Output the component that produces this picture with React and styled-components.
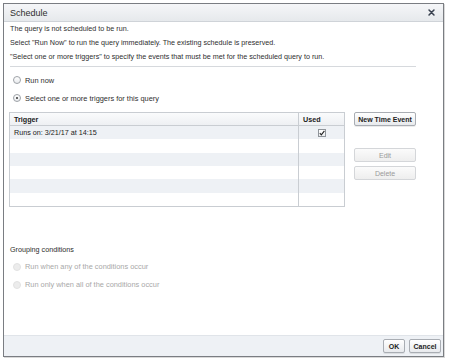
import React from "react";
import styled, { createGlobalStyle } from "styled-components";

const Global = createGlobalStyle`
  html, body { margin: 0; padding: 0; background: #ffffff; }
  body { font-family: "Liberation Sans", Arial, sans-serif; color: #333; }
  * { box-sizing: border-box; }
`;

const Page = styled.div`
  padding: 3px 0 0 3px;
  width: 474px;
  height: 362px;
`;

const Dialog = styled.div`
  width: 441px;
  height: 354px;
  border: 1px solid #7a7d82;
  display: flex;
  flex-direction: column;
  background: #fff;
  box-shadow: 1px 1px 0 rgba(0,0,0,0.15);
`;

const TitleBar = styled.div`
  height: 18px;
  flex: none;
  display: flex;
  align-items: center;
  justify-content: space-between;
  padding: 0 8px 0 6px;
  background: linear-gradient(#f5f6f8, #e6e9ec);
  border-bottom: 1px solid #cfd3d8;
  font-size: 9px;
  color: #2e2e2e;
`;

const Close = styled.svg`
  width: 7px;
  height: 7px;
`;

const Body = styled.div`
  flex: 1;
  display: flex;
  flex-direction: column;
  padding: 0 0 0 5px;
`;

const Line = styled.div`
  height: 14px;
  line-height: 14px;
  font-size: 7.2px;
  padding-left: 1px;
  color: #2e2e2e;
  white-space: nowrap;
`;

const Separator = styled.div`
  height: 1px;
  width: 406px;
  margin: 2px 0 4px 1px;
  background: #d6d9dd;
`;

const RadioRow = styled.div`
  height: 18px;
  display: flex;
  align-items: center;
  gap: 4px;
  padding-left: 4px;
  font-size: 7.4px;
  color: ${(p) => (p.$disabled ? "#a8a8a8" : "#2e2e2e")};
`;

const Radio = styled.span`
  width: 8px;
  height: 8px;
  border-radius: 50%;
  flex: none;
  display: flex;
  align-items: center;
  justify-content: center;
  border: 1px solid ${(p) => (p.$disabled ? "#e2e2e2" : "#9ea2a7")};
  background: ${(p) =>
    p.$disabled ? "#ececec" : "linear-gradient(#ffffff, #e9ebee)"};
  &::after {
    content: "";
    width: 2px;
    height: 2px;
    border-radius: 50%;
    background: #333;
    display: ${(p) => (p.$checked ? "block" : "none")};
  }
`;

const TableArea = styled.div`
  display: flex;
  align-items: flex-start;
  gap: 9px;
  margin-top: 5px;
`;

const Table = styled.div`
  width: 336px;
  border: 1px solid #c9cdd2;
  display: flex;
  flex-direction: column;
`;

const Row = styled.div`
  display: grid;
  grid-template-columns: 288px 1fr;
  height: ${(p) => (p.$head ? "13px" : "13.33px")};
  background: ${(p) =>
    p.$head ? "linear-gradient(#fafbfc, #eef0f3)" : p.$alt ? "#eef1f5" : "#fff"};
  border-bottom: ${(p) => (p.$head ? "1px solid #c9cdd2" : "none")};
  font-size: 7.2px;
  font-weight: ${(p) => (p.$head ? "bold" : "normal")};
  color: #222;
`;

const Cell = styled.div`
  display: flex;
  align-items: center;
  justify-content: ${(p) => (p.$center ? "center" : "flex-start")};
  padding-left: ${(p) => (p.$center ? "0" : "4px")};
  border-left: ${(p) => (p.$divider ? "1px solid #c9cdd2" : "none")};
  white-space: nowrap;
`;

const Check = styled.span`
  width: 8px;
  height: 8px;
  border: 1px solid #8f949a;
  background: linear-gradient(#ffffff, #eceef1);
  display: flex;
  align-items: center;
  justify-content: center;
`;

const ButtonCol = styled.div`
  display: flex;
  flex-direction: column;
  width: 62px;
`;

const Button = styled.button`
  height: 14px;
  width: ${(p) => p.$w || "100%"};
  margin-top: ${(p) => p.$mt || "0"};
  padding: 0;
  font-family: "Liberation Sans", Arial, sans-serif;
  font-size: 7px;
  font-weight: ${(p) => (p.disabled ? "normal" : "bold")};
  color: ${(p) => (p.disabled ? "#9a9a9a" : "#222")};
  border: 1px solid ${(p) => (p.disabled ? "#d4d6d9" : "#a9adb3")};
  border-radius: 2px;
  background: ${(p) =>
    p.disabled ? "linear-gradient(#fbfbfb, #eeeeee)" : "linear-gradient(#ffffff, #e8eaed)"};
  box-shadow: ${(p) => (p.disabled ? "none" : "0 1px 0 rgba(0,0,0,0.08)")};
`;

const GroupTitle = styled(Line)`
  margin-top: 35px;
  height: 16px;
  line-height: 16px;
`;

const Footer = styled.div`
  height: 21px;
  flex: none;
  display: flex;
  justify-content: flex-end;
  align-items: center;
  gap: 4px;
  padding-right: 2px;
  background: #eef1f5;
  border-top: 1px solid #e0e4e9;
`;

export default function App() {
  const rows = [0, 1, 2, 3, 4, 5];
  return (
    <Page>
      <Global />
      <Dialog>
        <TitleBar>
          <span>Schedule</span>
          <Close viewBox="0 0 10 10">
            <path d="M1.5 1.5 L8.5 8.5 M8.5 1.5 L1.5 8.5" stroke="#3a4250" strokeWidth="2.2" strokeLinecap="round" />
          </Close>
        </TitleBar>
        <Body>
          <Line>The query is not scheduled to be run.</Line>
          <Line>Select "Run Now" to run the query immediately. The existing schedule is preserved.</Line>
          <Line>"Select one or more triggers" to specify the events that must be met for the scheduled query to run.</Line>
          <Separator />
          <RadioRow>
            <Radio />
            <span>Run now</span>
          </RadioRow>
          <RadioRow>
            <Radio $checked />
            <span>Select one or more triggers for this query</span>
          </RadioRow>
          <TableArea>
            <Table>
              <Row $head>
                <Cell>Trigger</Cell>
                <Cell $divider>Used</Cell>
              </Row>
              {rows.map((i) => (
                <Row key={i} $alt={i % 2 === 0}>
                  <Cell>{i === 0 ? "Runs on: 3/21/17 at 14:15" : ""}</Cell>
                  <Cell $divider $center>
                    {i === 0 && (
                      <Check>
                        <svg width="6" height="6" viewBox="0 0 6 6">
                          <path d="M0.8 3.2 L2.3 4.8 L5.4 0.8" fill="none" stroke="#222" strokeWidth="1.1" />
                        </svg>
                      </Check>
                    )}
                  </Cell>
                </Row>
              ))}
            </Table>
            <ButtonCol>
              <Button>New Time Event</Button>
              <Button disabled $mt="22px">Edit</Button>
              <Button disabled $mt="4px">Delete</Button>
            </ButtonCol>
          </TableArea>
          <GroupTitle>Grouping conditions</GroupTitle>
          <RadioRow $disabled>
            <Radio $disabled />
            <span>Run when any of the conditions occur</span>
          </RadioRow>
          <RadioRow $disabled>
            <Radio $disabled />
            <span>Run only when all of the conditions occur</span>
          </RadioRow>
        </Body>
        <Footer>
          <Button $w="22px">OK</Button>
          <Button $w="32px">Cancel</Button>
        </Footer>
      </Dialog>
    </Page>
  );
}
